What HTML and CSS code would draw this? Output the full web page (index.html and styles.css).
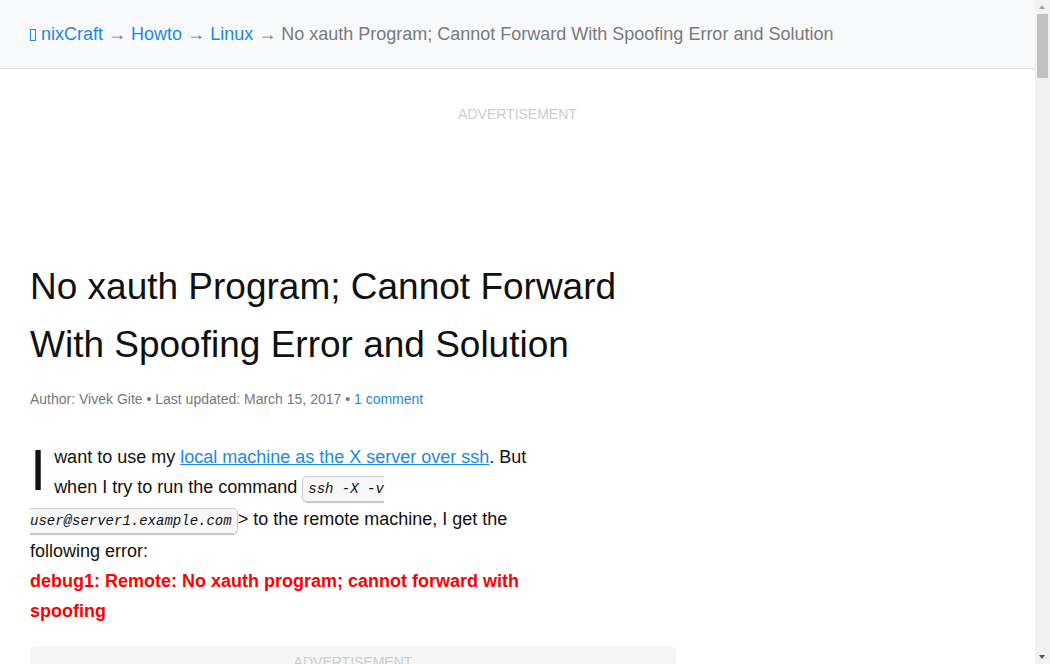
FILE: index.html
```html
<!DOCTYPE html>
<html lang="en">
<head>
<meta charset="utf-8">
<title>No xauth Program; Cannot Forward With Spoofing Error and Solution</title>
<link rel="stylesheet" href="styles.css">
</head>
<body>
<div class="page">
  <header class="topbar">
    <nav class="crumbs">
      <a href="#" class="crumb"><span class="tofu" aria-hidden="true"></span> nixCraft</a>
      <span class="arrow">→</span>
      <a href="#" class="crumb">Howto</a>
      <span class="arrow">→</span>
      <a href="#" class="crumb">Linux</a>
      <span class="arrow">→</span>
      <span class="current">No xauth Program; Cannot Forward With Spoofing Error and Solution</span>
    </nav>
  </header>
  <div class="ad-top">ADVERTISEMENT</div>
  <main class="content">
    <h1 class="title">No xauth Program; Cannot Forward With Spoofing Error and Solution</h1>
    <p class="meta">Author: Vivek Gite • Last updated: March 15, 2017 • <a href="#" class="meta-link">1 comment</a></p>
    <div class="article">
      <p class="lead"><span class="dropcap">I</span> want to use my <a href="#" class="inline-link">local machine as the X server over ssh</a>. But when I try to run the command <code class="cmd">ssh -X -v user@server1.example.com</code><span class="line-strut" aria-hidden="true"></span>&gt; to the remote machine, I get the following error:</p>
      <p class="error">debug1: Remote: No xauth program; cannot forward with spoofing</p>
    </div>
    <div class="ad-box">ADVERTISEMENT</div>
  </main>
</div>
<div class="scrollbar" aria-hidden="true">
  <span class="sb-up"></span>
  <span class="sb-thumb"></span>
  <span class="sb-down"></span>
</div>
</body>
</html>
```
FILE: styles.css
```css
html, body {
  margin: 0;
  padding: 0;
}
body {
  font-family: "Liberation Sans", Arial, sans-serif;
  color: #111;
  background: #fff;
}
.page {
  margin-right: 15px;
}
.topbar {
  background: #f8f9fa;
  border-bottom: 1px solid #dee0e2;
  height: 68px;
  display: flex;
  align-items: center;
  padding: 0 30px;
}
.crumbs {
  font-size: 18px;
  line-height: 24px;
  color: #777;
  white-space: nowrap;
}
.crumb {
  color: #1e88e5;
  text-decoration: none;
}
.arrow {
  color: #777;
}
.current {
  color: #7a7a7a;
}
.tofu {
  display: inline-block;
  width: 4px;
  height: 10px;
  border: 1px solid #1e88e5;
  vertical-align: -1px;
}
.ad-top {
  height: 170px;
  box-sizing: border-box;
  padding-top: 37px;
  text-align: center;
  font-size: 14px;
  line-height: 16px;
  color: #ccc;
}
.content {
  width: 646px;
  padding: 19px 30px 0;
  min-height: 6200px;
}
.title {
  margin: 0;
  font-size: 37px;
  line-height: 58px;
  font-weight: normal;
  color: #111;
}
.meta {
  margin: 15px 0 0;
  font-size: 14px;
  line-height: 20px;
  color: #777;
}
.meta-link {
  color: #1e88e5;
  text-decoration: none;
}
.article {
  width: 530px;
  margin-top: 33px;
  font-size: 18px;
}
.lead {
  margin: 0;
  line-height: 30px;
}
.dropcap {
  float: left;
  font-size: 58px;
  line-height: 46px;
  margin: 5px 8px 0 0;
  color: #111;
}
.inline-link {
  color: #1e88e5;
  text-decoration: underline;
}
.cmd {
  font-family: "Liberation Mono", "Courier New", monospace;
  font-style: italic;
  font-size: 14px;
  line-height: 20px;
  background: #f7f7f7;
  border: 1px solid #ccc;
  border-radius: 5px;
  padding: 4px 5px;
  box-shadow: 0 1px 1px rgba(0,0,0,0.25);
  color: #111;
}
.line-strut {
  display: inline-block;
  width: 0;
  height: 34px;
  vertical-align: -11px;
}
.error {
  margin: 0;
  color: #ff0000;
  font-weight: bold;
  font-size: 18px;
  line-height: 30px;
}
.ad-box {
  margin-top: 20px;
  background: #f5f5f5;
  border-radius: 6px;
  height: 280px;
  text-align: center;
  font-size: 14px;
  line-height: 16px;
  padding-top: 8px;
  color: #ccc;
  box-sizing: border-box;
}
.scrollbar {
  position: fixed;
  top: 0;
  right: 0;
  width: 15px;
  height: 100%;
  background: #f1f1f1;
}
.sb-up {
  position: absolute;
  top: 5px;
  left: 4px;
  width: 0;
  height: 0;
  border-left: 3.5px solid transparent;
  border-right: 3.5px solid transparent;
  border-bottom: 4px solid #a3a3a3;
}
.sb-thumb {
  position: absolute;
  top: 14px;
  left: 2px;
  width: 11px;
  height: 64px;
  background: #c1c1c1;
}
.sb-down {
  position: absolute;
  bottom: 5px;
  left: 4px;
  width: 0;
  height: 0;
  border-left: 3.5px solid transparent;
  border-right: 3.5px solid transparent;
  border-top: 4px solid #505050;
}
```
